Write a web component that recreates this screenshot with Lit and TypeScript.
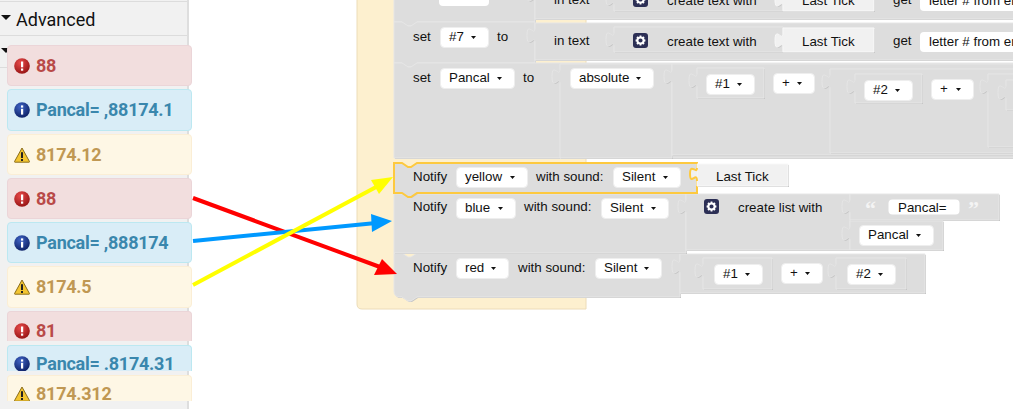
import { LitElement, html, css, svg } from "lit";
import { customElement } from "lit/decorators.js";

type Kind = "err" | "info" | "warn";
const toasts: { k: Kind; t: string; h?: number }[] = [
  { k: "err", t: "88" },
  { k: "info", t: "Pancal= ,88174.1" },
  { k: "warn", t: "8174.12" },
  { k: "err", t: "88" },
  { k: "info", t: "Pancal= ,888174" },
  { k: "warn", t: "8174.5" },
  { k: "err", t: "81", h: 30 },
  { k: "info", t: "Pancal= .8174.31", h: 26 },
  { k: "warn", t: "8174.312", h: 26 },
];

const icon = (k: Kind) => {
  if (k === "warn")
    return svg`<svg class="ico" viewBox="0 0 16 16"><path d="M8 1 L15.5 14.6 Q15.6 15.2 15 15.2 H1 Q.4 15.2 .5 14.6 Z" fill="#f3c531" stroke="#8a6d1c" stroke-width="1"/><rect x="7" y="5.2" width="2" height="5.8" fill="#222"/><rect x="7" y="12" width="2" height="2" fill="#222"/></svg>`;
  const a = k === "err" ? "#e84a4a" : "#3f63c4";
  const b = k === "err" ? "#8e0f0f" : "#081a5c";
  const glyph =
    k === "err"
      ? svg`<rect x="7" y="3.5" width="2.2" height="5.8" fill="#fff"/><rect x="7" y="10.5" width="2.2" height="2.2" fill="#fff"/>`
      : svg`<rect x="7" y="3.4" width="2.2" height="2.2" fill="#fff"/><rect x="7" y="6.8" width="2.2" height="5.8" fill="#fff"/>`;
  return svg`<svg class="ico" viewBox="0 0 16 16"><defs><radialGradient id=${"g" + k} cx=".4" cy=".3" r=".8"><stop offset="0" stop-color=${a}/><stop offset="1" stop-color=${b}/></radialGradient></defs><circle cx="8" cy="8" r="7.8" fill=${"url(#g" + k + ")"}/>${glyph}</svg>`;
};

interface BlockOpts {
  fill?: string;
  dark?: string;
  light?: string;
  tab?: boolean;
  top?: boolean;
  bottom?: boolean;
  round?: boolean;
  stroke?: string;
}

function blockPath(x: number, y: number, w: number, h: number, o: BlockOpts) {
  let d = `M ${x} ${y} `;
  if (o.top) d += `H ${x + 8} l 6 4 3 0 6 -4 `;
  d += `H ${x + w} V ${y + h} `;
  if (o.bottom) d += `H ${x + 23} l -6 4 -3 0 -6 -4 `;
  if (o.round) d += `H ${x + 6} Q ${x} ${y + h} ${x} ${y + h - 6} `;
  else d += `H ${x} `;
  if (o.tab) d += `V ${y + 20} c 0,-10 -8,8 -8,-7.5 c 0,-15.5 8,2.5 8,-7.5 `;
  d += "Z";
  return d;
}

function block(x: number, y: number, w: number, h: number, o: BlockOpts = {}) {
  const fill = o.fill ?? "#dddddd";
  const dark = o.dark ?? "#c6c6c6";
  const light = o.light ?? "#e6e6e6";
  const d = blockPath(x, y, w, h, o);
  return svg`<path d=${d} fill=${dark} transform="translate(1 1)"/><path d=${d} fill=${fill} stroke=${o.stroke ?? light} stroke-width=${o.stroke ? 2 : 1}/>`;
}

const label = (x: number, y: number, t: string, cls = "t") =>
  svg`<text x=${x} y=${y} class=${cls}>${t}</text>`;

function field(x: number, y: number, w: number, t: string, h = 20) {
  return svg`<rect x=${x + 0.5} y=${y + 0.5} width=${w} height=${h} rx="4" fill="#fff" stroke="#eeeeee"/>
    <text x=${x + 9} y=${y + 14} class="t">${t}</text>
    <path d="M ${x + w - 17} ${y + 9} h 5 l -2.5 3 z" fill="#111"/>`;
}

const gear = (x: number, y: number) => svg`
  <g transform="translate(${x} ${y})">
    <rect width="15" height="15" rx="3" fill="#2c2f55"/>
    <circle cx="7.5" cy="7.5" r="3.1" fill="none" stroke="#fff" stroke-width="2"/>
    <g stroke="#fff" stroke-width="1.8">
      <path d="M7.5 2.6v1.4M7.5 11v1.4M2.6 7.5h1.4M11 7.5h1.4M4 4l1 1M10 10l1 1M11 4l-1 1M5 10l-1 1"/>
    </g>
  </g>`;

function textRow(dy: number) {
  return svg`
    ${block(535, 23 + dy, 500, 37, { tab: true })}
    ${label(554, 45 + dy, "in text")}
    ${block(614, 27 + dy, 169, 25, { tab: true })}
    ${gear(633, 33 + dy)}
    ${label(667, 46 + dy, "create text with")}
    ${block(783, 28 + dy, 91, 24, { tab: true, fill: "#f1f1f1", dark: "#c8c8c8", light: "#f8f8f8" })}
    ${label(802, 46 + dy, "Last Tick")}
    ${label(893, 45 + dy, "get")}
    <rect x="920" y=${32 + dy} width="110" height="20" rx="4" fill="#fff"/>
    ${label(929, 46 + dy, "letter # from end")}
  `;
}

@customElement("app-root")
export class AppRoot extends LitElement {
  static styles = css`
    :host {
      display: block;
      width: 1013px;
      height: 409px;
      position: relative;
      overflow: hidden;
      background: #fff;
      font-family: Roboto, "Liberation Sans", sans-serif;
    }
    .panel {
      position: absolute;
      left: 0;
      top: 0;
      width: 187px;
      height: 408px;
      background: #f1f1f1;
      border-right: 2px solid #dedede;
      padding-top: 1px;
      box-sizing: content-box;
    }
    .row {
      border-top: 1px solid #dcdcdc;
      display: flex;
      align-items: center;
      gap: 5px;
      padding: 2px 0 0 1px;
      box-sizing: border-box;
      height: 34px;
      font-size: 18px;
      color: #111;
    }
    .row.last {
      border-bottom: 1px solid #dcdcdc;
      height: 33px;
    }
    .caret {
      width: 0;
      height: 0;
      border-left: 5px solid transparent;
      border-right: 5px solid transparent;
      border-top: 5px solid #111;
      margin-bottom: 4px;
    }
    .last .caret {
      margin-bottom: 5px;
    }
    .stack {
      position: absolute;
      left: 7px;
      top: 45px;
      width: 185px;
      display: flex;
      flex-direction: column;
      gap: 3px;
    }
    .toast {
      height: 41.25px;
      box-sizing: border-box;
      border-width: 1px;
      border-style: solid;
      border-radius: 4px;
      display: flex;
      align-items: flex-start;
      gap: 6px;
      padding: 11px 0 0 6px;
      font-size: 18px;
      font-weight: 700;
      letter-spacing: -0.25px;
      line-height: 18px;
      overflow: hidden;
    }
    .toast.h {
      border-bottom: 0;
      border-radius: 4px 4px 0 0;
      padding-top: 10px;
    }
    .stack .toast.cut {
      margin-top: 1px;
      padding-top: 9px;
    }
    .err {
      background: #f2dede;
      border-color: #ebd5d8;
      color: #b94a48;
    }
    .info {
      background: #d9edf7;
      border-color: #bce8f1;
      color: #3a87ad;
    }
    .warn {
      background: #fef7e5;
      border-color: #fbeed5;
      color: #c09853;
    }
    .ico {
      width: 16px;
      height: 16px;
      flex: none;
      margin-top: 1px;
    }
    .scene {
      position: absolute;
      left: 0;
      top: 0;
      width: 1013px;
      height: 409px;
    }
    .t {
      font: 13.33px "Liberation Sans", Arial, sans-serif;
      fill: #111;
    }
    .q {
      font: bold 22px "Liberation Serif", serif;
      fill: #f4f4f4;
    }
  `;

  render() {
    return html`
      <svg class="scene" viewBox="0 0 1013 409">
        <path d="M357 -2 H586 V309 H362 Q357 309 357 304 Z" fill="#fdf0cf" stroke="#ecdcb8" />

        <!-- first set block -->
        ${block(394, -20, 141, 42, { bottom: true })}
        <rect x="439" y="-14" width="50" height="20" rx="4" fill="#fff" />
        ${textRow(-41)}

        <!-- set #7 -->
        ${block(394, 22, 141, 41, { top: true, bottom: true })}
        ${label(413, 41, "set")}
        ${field(440, 27, 48, "#7")}
        ${label(497, 41, "to")}
        ${textRow(0)}

        <!-- set Pancal -->
        ${block(394, 63, 800, 95, { top: true })}
        ${label(413, 82, "set")}
        ${field(440, 68, 74, "Pancal")}
        ${label(523, 82, "to")}
        ${block(560, 64, 112, 94, { tab: true })}
        ${field(570, 68, 83, "absolute")}
        ${block(672, 64, 400, 91, { tab: true })}
        ${block(697, 68, 67, 30, { tab: true })}
        ${field(706, 74, 48, "#1")}
        ${field(773, 73, 41, "+")}
        ${block(830, 69, 300, 84, { tab: true })}
        ${block(855, 74, 67, 29, { tab: true })}
        ${field(864, 80, 48, "#2")}
        ${field(931, 79, 42, "+")}
        ${block(988, 74, 100, 73, { tab: true })}
        ${block(1006, 80, 60, 30, { tab: true })}

        <!-- notify red -->
        ${block(394, 253, 286, 44, { top: true, bottom: true, round: true })}
        ${label(413, 272, "Notify")}
        ${field(456, 258, 52, "red")}
        ${label(518, 272, "with sound:")}
        ${field(595, 258, 66, "Silent")}
        ${block(680, 254, 245, 39, { tab: true })}
        ${block(703, 258, 69, 31, { tab: true })}
        ${field(714, 264, 48, "#1")}
        ${field(781, 263, 41, "+")}
        ${block(836, 258, 70, 31, { tab: true })}
        ${field(847, 264, 48, "#2")}

        <!-- notify blue -->
        ${block(394, 194, 292, 59, {})}
        ${label(413, 211, "Notify")}
        ${field(456, 198, 59, "blue")}
        ${label(524, 211, "with sound:")}
        ${field(601, 198, 67, "Silent")}
        ${block(686, 194, 164, 56, { tab: true })}
        ${gear(704, 199)}
        ${label(738, 212, "create list with")}
        ${block(850, 194, 149, 26, { tab: true })}
        ${label(865, 216, "\u201C", "q")}
        <rect x="888.5" y="199.5" width="71" height="15" rx="4" fill="#fff" />
        ${label(898, 212, "Pancal=")}
        ${label(968, 216, "\u201D", "q")}
        ${block(850, 221, 93, 29, { tab: true })}
        ${field(859, 225, 74, "Pancal")}

        <!-- notify yellow, selected -->
        ${block(394, 163, 303, 30, { top: true, bottom: true, stroke: "#fdc93f" })}
        ${label(413, 181, "Notify")}
        ${field(456, 167, 71, "yellow")}
        ${label(536, 181, "with sound:")}
        ${field(613, 167, 67, "Silent")}
        ${block(697, 164, 91, 22, { fill: "#f1f1f1", dark: "#c8c8c8", light: "#f8f8f8" })}
        <path d="M697 168 c 0,7 -7,-6 -7,6 s 7,-3 7,7" fill="#f1f1f1" stroke="#fdc93f" stroke-width="2" />
        ${label(716, 181, "Last Tick")}

        <!-- arrows -->
        <line x1="193" y1="198" x2="380" y2="267" stroke="#ff0000" stroke-width="4" />
        <polygon points="397,274 374,275 382,259" fill="#ff0000" />
        <line x1="193" y1="241" x2="376" y2="223" stroke="#0099ff" stroke-width="4" />
        <polygon points="392,221 372,232 371,214" fill="#0099ff" />
        <line x1="193" y1="285" x2="378" y2="186" stroke="#ffff00" stroke-width="4" />
        <polygon points="393,177 379,194 371,180" fill="#ffff00" />
      </svg>
      <div class="panel">
        <div class="row"><span class="caret"></span>Advanced</div>
        <div class="row last"><span class="caret"></span></div>
      </div>
      <div class="stack">
        ${toasts.map(
          (t, i) => html`<div
            class="toast ${t.k} ${t.h ? "h" : ""} ${i > 6 ? "cut" : ""}"
            style=${t.h ? `height:${t.h}px` : ""}
          >
            ${icon(t.k)}<span>${t.t}</span>
          </div>`
        )}
      </div>
    `;
  }
}
